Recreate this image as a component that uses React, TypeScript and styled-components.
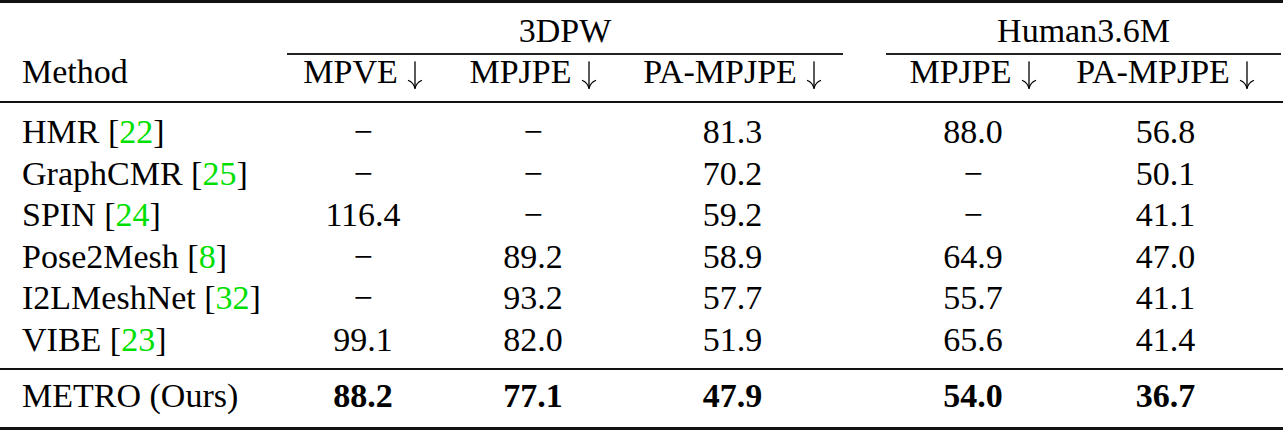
import React from 'react';
import styled, { createGlobalStyle } from 'styled-components';

const GlobalStyle = createGlobalStyle`
  html, body {
    margin: 0;
    padding: 0;
    background: #fff;
  }
  body {
    font-family: "Liberation Serif", "Times New Roman", serif;
    color: #000;
  }
`;

// column layout shared by every row (widths measured from the paper table)
const COLUMNS = '287px 152px 188px 216px 43px 174px 223px';

const Table = styled.div`
  width: 1283px;
  display: flex;
  flex-direction: column;
  font-size: 34px;
`;

const Rule = styled.div<{ $thick?: boolean }>`
  height: ${(p) => (p.$thick ? '3px' : '2px')};
  background: #111;
`;

const Row = styled.div<{ $lh?: number }>`
  display: grid;
  grid-template-columns: ${COLUMNS};
  line-height: ${(p) => p.$lh ?? 41.6}px;
  white-space: nowrap;

  & > :nth-child(4) {
    padding-right: 5px;
  }
  & > :nth-child(7) {
    padding-right: 12px;
  }
`;

const GroupRow = styled.div`
  display: grid;
  grid-template-columns: ${COLUMNS};
  line-height: 34px;
  padding-top: 11px;
`;

const Group = styled.div<{ $span: string; $trimL?: number; $trimR?: number }>`
  grid-column: ${(p) => p.$span};
  display: flex;
  flex-direction: column;
  align-items: stretch;
  margin-left: ${(p) => p.$trimL ?? 0}px;
  margin-right: ${(p) => p.$trimR ?? 0}px;
`;

const GroupTitle = styled.div`
  text-align: center;
`;

const CMidRule = styled.div`
  margin-top: 5px;
  height: 2px;
  background: #222;
`;

const HeadRow = styled(Row)`
  padding-bottom: 12px;
`;

const Body = styled.div`
  display: flex;
  flex-direction: column;
  padding: 8px 0 7.5px;
`;

const FinalRow = styled(Row)`
  padding: 4.5px 0 11px;
`;

const Cell = styled.div<{ $left?: boolean; $bold?: boolean }>`
  text-align: ${(p) => (p.$left ? 'left' : 'center')};
  padding-left: ${(p) => (p.$left ? '22px' : '0')};
  font-weight: ${(p) => (p.$bold ? 700 : 400)};
`;

const Cite = styled.span`
  color: #00e000;
`;

const ArrowSvg = styled.svg`
  width: 16px;
  height: 28px;
  margin-left: 9px;
  vertical-align: -6px;
`;

const Down = () => (
  <ArrowSvg viewBox="0 0 16 28" fill="none" stroke="#000" strokeWidth={1.3} strokeLinecap="round">
    <path d="M8 0.8 V27" />
    <path d="M1.5 19.5 C5 21 7 23.5 8 27.3 C9 23.5 11 21 14.5 19.5" />
  </ArrowSvg>
);

type Entry = {
  name: string;
  cite: string;
  vals: [string, string, string, string, string];
};

const DASH = '\u2212';

const rows: Entry[] = [
  { name: 'HMR', cite: '22', vals: [DASH, DASH, '81.3', '88.0', '56.8'] },
  { name: 'GraphCMR', cite: '25', vals: [DASH, DASH, '70.2', DASH, '50.1'] },
  { name: 'SPIN', cite: '24', vals: ['116.4', DASH, '59.2', DASH, '41.1'] },
  { name: 'Pose2Mesh', cite: '8', vals: [DASH, '89.2', '58.9', '64.9', '47.0'] },
  { name: 'I2LMeshNet', cite: '32', vals: [DASH, '93.2', '57.7', '55.7', '41.1'] },
  { name: 'VIBE', cite: '23', vals: ['99.1', '82.0', '51.9', '65.6', '41.4'] },
];

const ours: [string, string, string, string, string] = ['88.2', '77.1', '47.9', '54.0', '36.7'];

const App: React.FC = () => {
  return (
    <>
      <GlobalStyle />
      <Table>
        <Rule $thick />
        <GroupRow>
          <Group $span="2 / 5">
            <GroupTitle>3DPW</GroupTitle>
            <CMidRule />
          </Group>
          <Group $span="6 / 8" $trimR={2}>
            <GroupTitle>Human3.6M</GroupTitle>
            <CMidRule />
          </Group>
        </GroupRow>
        <HeadRow $lh={34}>
          <Cell $left>Method</Cell>
          <Cell>MPVE<Down /></Cell>
          <Cell>MPJPE<Down /></Cell>
          <Cell>PA-MPJPE<Down /></Cell>
          <Cell />
          <Cell>MPJPE<Down /></Cell>
          <Cell>PA-MPJPE<Down /></Cell>
        </HeadRow>
        <Rule />
        <Body>
          {rows.map((r) => (
            <Row key={r.name}>
              <Cell $left>
                {r.name} [<Cite>{r.cite}</Cite>]
              </Cell>
              <Cell>{r.vals[0]}</Cell>
              <Cell>{r.vals[1]}</Cell>
              <Cell>{r.vals[2]}</Cell>
              <Cell />
              <Cell>{r.vals[3]}</Cell>
              <Cell>{r.vals[4]}</Cell>
            </Row>
          ))}
        </Body>
        <Rule />
        <FinalRow>
          <Cell $left>METRO (Ours)</Cell>
          <Cell $bold>{ours[0]}</Cell>
          <Cell $bold>{ours[1]}</Cell>
          <Cell $bold>{ours[2]}</Cell>
          <Cell />
          <Cell $bold>{ours[3]}</Cell>
          <Cell $bold>{ours[4]}</Cell>
        </FinalRow>
        <Rule $thick />
      </Table>
    </>
  );
};

export default App;
